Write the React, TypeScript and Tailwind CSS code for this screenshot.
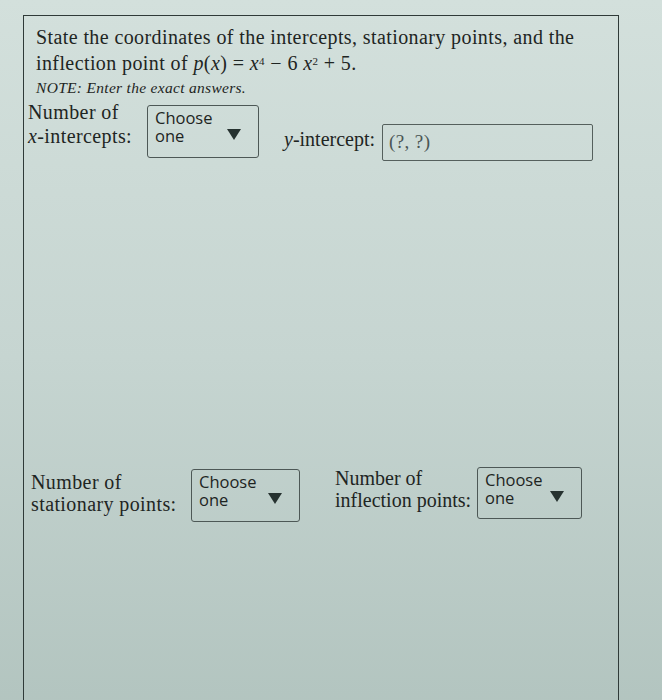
import React from "react";

function Select({ className = "" }: { className?: string }) {
  return (
    <div
      className={`relative flex shrink-0 flex-col rounded-[3px] border-[1.5px] border-[#4d5856] pl-[7px] pt-[3px] font-['Open_Sans',sans-serif] text-[16.5px] leading-[18px] tracking-normal text-[#1d2422] ${className}`}
    >
      <span>Choose</span>
      <span>one</span>
      <svg
        className="absolute right-[17px] top-[23px]"
        width="14"
        height="11"
        viewBox="0 0 14 11"
      >
        <polygon points="0,0 14,0 7,11" fill="#263230" />
      </svg>
    </div>
  );
}

export default function App() {
  return (
    <div className="min-h-[700px] w-[662px] overflow-hidden bg-gradient-to-b from-[#d3e0dc] via-[#c6d5d1] to-[#b2c4bf] pl-[23px] pt-[15px]">
      <div className="flex h-[700px] w-[596px] flex-col border-[1.5px] border-b-0 border-[#2f3a38] font-['Liberation_Serif',serif] tracking-[0.4px] text-[#1e2523]">
        {/* 問題文 */}
        <div className="whitespace-nowrap pl-[12px] pr-[4px] pt-[8px] text-[20px] leading-[26px]">
          <p>State the coordinates of the intercepts, stationary points, and the</p>
          <p>
            inflection point of <i>p</i>(<i>x</i>) = <i>x</i>
            <sup className="text-[11px]">4</sup> − 6 <i>x</i>
            <sup className="text-[11px]">2</sup> + 5.
          </p>
          <p className="mt-[2px] text-[15.5px] italic leading-[20px] tracking-[0.3px]">
            NOTE: Enter the exact answers.
          </p>
        </div>

        {/* x切片 / y切片 */}
        <div className="mt-[2px] flex items-start whitespace-nowrap pl-[4px]">
          <div className="w-[119px] shrink-0 text-[20px] leading-[24px]">
            <div>Number of</div>
            <div>
              <i>x</i>-intercepts:
            </div>
          </div>
          <Select className="mt-[5px] h-[53px] w-[112px]" />
          <div className="ml-[25px] mt-[24px] flex items-start">
            <span className="mt-[3px] w-[98px] shrink-0 text-[20px] leading-[24px] tracking-normal">
              <i>y</i>-intercept:
            </span>
            <div className="flex h-[37px] w-[211px] items-center rounded-[2px] border-[1.5px] border-[#55605d] pl-[6px] text-[19px] text-[#4a5654]">
              (?, ?)
            </div>
          </div>
        </div>

        {/* 停留点 / 変曲点 */}
        <div className="mt-[306px] flex items-start whitespace-nowrap pl-[7px]">
          <div className="mt-[4px] w-[160px] shrink-0 text-[20px] leading-[22px]">
            <div>Number of</div>
            <div>stationary points:</div>
          </div>
          <Select className="mt-[2px] h-[53px] w-[109px]" />
          <div className="ml-[35px] flex items-start">
            <div className="w-[142px] shrink-0 text-[20px] leading-[22px] tracking-normal">
              <div>Number of</div>
              <div>inflection points:</div>
            </div>
            <Select className="h-[52px] w-[105px]" />
          </div>
        </div>
      </div>
    </div>
  );
}
